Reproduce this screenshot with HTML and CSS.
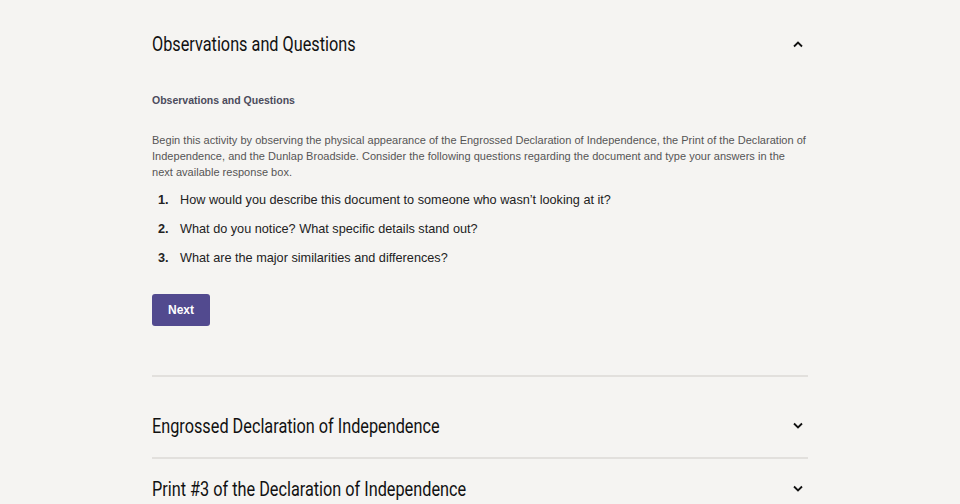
FILE: index.html
```html
<!DOCTYPE html>
<html>
<head>
<meta charset="utf-8">
<link rel="stylesheet" href="styles.css">
</head>
<body>
<main class="wrap">
  <section class="acc open">
    <div class="acc-head">
      <h2>Observations and Questions</h2>
      <svg class="chev" width="12" height="8" viewBox="0 0 12 8"><path d="M2 6.5 L6 2.5 L10 6.5" fill="none" stroke="#111" stroke-width="1.8"/></svg>
    </div>
    <div class="acc-body">
      <h3>Observations and Questions</h3>
      <p>Begin this activity by observing the physical appearance of the Engrossed Declaration of Independence, the Print of the Declaration of Independence, and the Dunlap Broadside. Consider the following questions regarding the document and type your answers in the next available response box.</p>
      <ol>
        <li><span class="num">1.</span>How would you describe this document to someone who wasn’t looking at it?</li>
        <li><span class="num">2.</span>What do you notice? What specific details stand out?</li>
        <li><span class="num">3.</span>What are the major similarities and differences?</li>
      </ol>
      <button class="btn">Next</button>
    </div>
  </section>
  <section class="acc">
    <div class="acc-head">
      <h2>Engrossed Declaration of Independence</h2>
      <svg class="chev" width="12" height="8" viewBox="0 0 12 8"><path d="M2 1.5 L6 5.5 L10 1.5" fill="none" stroke="#111" stroke-width="1.8"/></svg>
    </div>
  </section>
  <section class="acc">
    <div class="acc-head">
      <h2>Print #3 of the Declaration of Independence</h2>
      <svg class="chev" width="12" height="8" viewBox="0 0 12 8"><path d="M2 1.5 L6 5.5 L10 1.5" fill="none" stroke="#111" stroke-width="1.8"/></svg>
    </div>
  </section>
</main>
</body>
</html>
```
FILE: styles.css
```css
html, body {
  margin: 0;
  padding: 0;
  background: #f5f4f2;
}
body {
  font-family: "Liberation Sans", Arial, sans-serif;
  color: #222;
}
.wrap {
  width: 656px;
  margin: 0 auto;
}
.acc + .acc {
  border-top: 2px solid #e2e0dd;
}
.open + .acc {
  padding-top: 19px;
}
.acc-head {
  display: flex;
  align-items: center;
  justify-content: space-between;
  padding: 20px 0 21px;
  height: 20px;
}
.open .acc-head {
  padding-top: 34px;
}
.acc h2 {
  margin: 0;
  font-family: Roboto, "Liberation Sans", Arial, sans-serif;
  font-weight: 400;
  font-size: 20px;
  line-height: 20px;
  color: #111;
  white-space: nowrap;
  transform: scaleX(0.813);
  transform-origin: left center;
}
.chev {
  margin-right: 4px;
}
.acc-body {
  padding: 19px 0 49px;
}
.acc-body h3 {
  margin: 0 0 25px;
  font-size: 10.5px;
  line-height: 13px;
  font-weight: 700;
  color: #4b4b5c;
}
.acc-body p {
  margin: 0 0 6px;
  font-size: 11px;
  line-height: 16px;
  letter-spacing: 0.02px;
  color: #555;
}
ol {
  list-style: none;
  margin: 0;
  padding: 0 0 0 6px;
}
ol li {
  font-size: 12.7px;
  line-height: 29px;
  color: #222;
}
.num {
  display: inline-block;
  width: 22px;
  font-weight: 700;
}
.btn {
  display: block;
  margin-top: 21px;
  width: 58px;
  height: 32px;
  border: 0;
  border-radius: 3px;
  background: #524a8f;
  color: #fff;
  font-family: "Liberation Sans", Arial, sans-serif;
  font-weight: 700;
  font-size: 12px;
}
```
